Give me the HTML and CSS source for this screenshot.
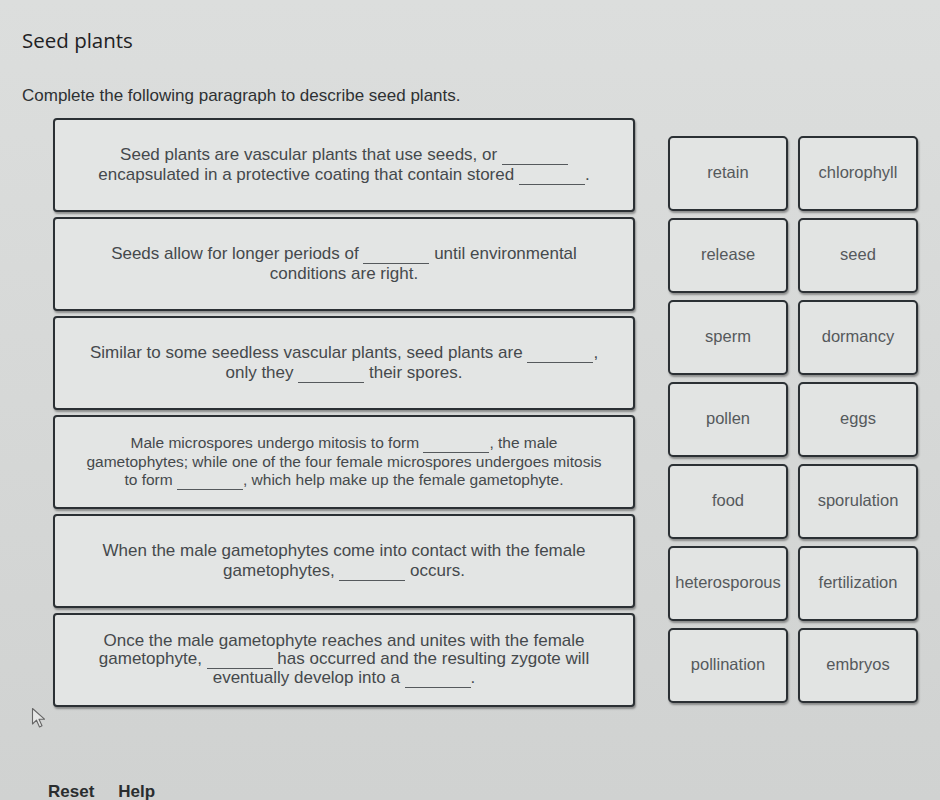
FILE: index.html
```html
<!DOCTYPE html>
<html>
<head>
<meta charset="utf-8">
<link rel="stylesheet" href="styles.css">
</head>
<body>
<div class="page">
  <h1 class="title">Seed plants</h1>
  <p class="intro">Complete the following paragraph to describe seed plants.</p>
  <div class="work">
    <div class="sentences">
      <div class="box"><p>Seed plants are vascular plants that use seeds, or <span class="blank"></span><br>encapsulated in a protective coating that contain stored <span class="blank"></span>.</p></div>
      <div class="box"><p>Seeds allow for longer periods of <span class="blank"></span> until environmental<br>conditions are right.</p></div>
      <div class="box"><p>Similar to some seedless vascular plants, seed plants are <span class="blank"></span>,<br>only they <span class="blank"></span> their spores.</p></div>
      <div class="box small"><p>Male microspores undergo mitosis to form <span class="blank"></span>, the male<br>gametophytes; while one of the four female microspores undergoes mitosis<br>to form <span class="blank"></span>, which help make up the female gametophyte.</p></div>
      <div class="box"><p>When the male gametophytes come into contact with the female<br>gametophytes, <span class="blank"></span> occurs.</p></div>
      <div class="box tight"><p>Once the male gametophyte reaches and unites with the female<br>gametophyte, <span class="blank"></span> has occurred and the resulting zygote will<br>eventually develop into a <span class="blank"></span>.</p></div>
    </div>
    <div class="tiles">
      <div class="tile">retain</div>
      <div class="tile">chlorophyll</div>
      <div class="tile">release</div>
      <div class="tile">seed</div>
      <div class="tile">sperm</div>
      <div class="tile">dormancy</div>
      <div class="tile">pollen</div>
      <div class="tile">eggs</div>
      <div class="tile">food</div>
      <div class="tile">sporulation</div>
      <div class="tile">heterosporous</div>
      <div class="tile">fertilization</div>
      <div class="tile">pollination</div>
      <div class="tile">embryos</div>
    </div>
  </div>
  <div class="cursor-row">
    <svg class="cursor" width="16" height="22" viewBox="0 0 16 22"><path d="M1.5 1.5 L1.5 17 L5.5 13.2 L8.5 20 L11 18.8 L8 12.2 L13.5 12.2 Z" fill="#e6e7e6" stroke="#666" stroke-width="1.1" stroke-linejoin="round"/></svg>
  </div>
  <div class="actions">
    <span class="action">Reset</span>
    <span class="action">Help</span>
  </div>
</div>
</body>
</html>
```

FILE: styles.css
```css
html, body {
  margin: 0;
  padding: 0;
}
body {
  width: 940px;
  height: 800px;
  overflow: hidden;
  background: linear-gradient(180deg, #dcdedd 0%, #d6d8d7 50%, #d0d2d1 100%);
  font-family: "Liberation Sans", Arial, sans-serif;
  color: #3a3d3f;
}
.page {
  padding: 0 0 0 22px;
}
.title {
  margin: 0;
  padding-top: 28px;
  font-family: "Open Sans", "Liberation Sans", sans-serif;
  font-weight: 400;
  font-size: 20.5px;
  line-height: 24px;
  color: #1f2224;
}
.intro {
  margin: 34px 0 0;
  font-size: 17px;
  line-height: 20px;
  color: #2e3133;
}
.work {
  display: flex;
  align-items: flex-start;
  margin-top: 12px;
  margin-left: 31px;
}
.sentences {
  display: flex;
  flex-direction: column;
  gap: 5px;
  width: 582px;
}
.box {
  height: 94px;
  box-sizing: border-box;
  border: 2px solid #2b3034;
  border-radius: 4px;
  background: #e3e5e4;
  box-shadow: 1px 2px 2px rgba(0, 0, 0, 0.35);
  display: flex;
  align-items: center;
  justify-content: center;
}
.box p {
  margin: 0;
  text-align: center;
  font-size: 17px;
  line-height: 20px;
  color: #45494c;
}
.box.small p {
  font-size: 15.5px;
  line-height: 18px;
}
.box.tight p {
  line-height: 18.5px;
}
.blank {
  display: inline-block;
  width: 66px;
  height: 14px;
  border-bottom: 1px solid #55595c;
  vertical-align: -5px;
}
.tiles {
  display: grid;
  grid-template-columns: 120px 120px;
  grid-auto-rows: 75px;
  column-gap: 10px;
  row-gap: 7px;
  margin-left: 33px;
  margin-top: 18px;
}
.tile {
  box-sizing: border-box;
  border: 2px solid #2b3034;
  border-radius: 5px;
  background: #e2e4e3;
  box-shadow: 1px 2px 2px rgba(0, 0, 0, 0.35);
  display: flex;
  align-items: center;
  justify-content: center;
  font-size: 16.5px;
  color: #55595c;
  white-space: nowrap;
  padding-bottom: 2px;
}
.cursor-row {
  height: 24px;
  margin-top: 0;
  padding-left: 9px;
}
.cursor {
  display: block;
}
.actions {
  margin-top: 52px;
  padding-left: 26px;
  display: flex;
  gap: 24px;
}
.action {
  font-size: 17px;
  line-height: 17px;
  font-weight: 700;
  color: #2a2d2f;
}
```
